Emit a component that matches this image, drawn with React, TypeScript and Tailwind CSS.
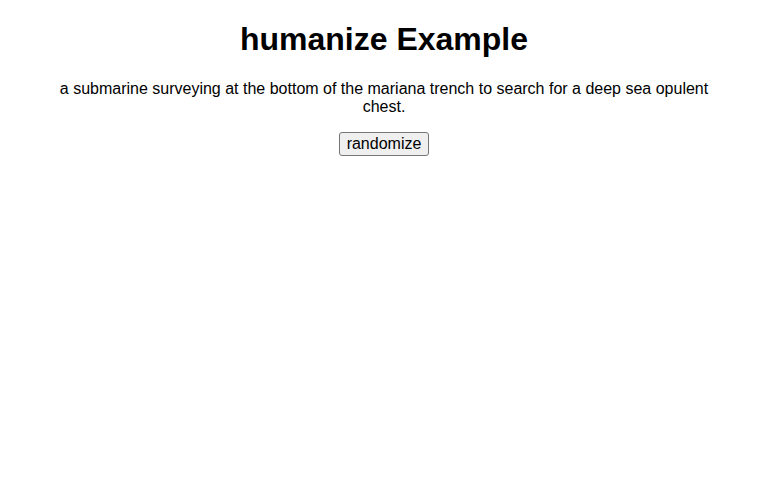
import React, { useState } from "react";

const phrases = [
  "a submarine surveying at the bottom of the mariana trench to search for a deep sea opulent chest.",
  "a lighthouse keeper counting the waves that break against the rocks on a stormy autumn night.",
  "a caravan of camels crossing the golden dunes in search of a hidden oasis at dawn.",
];

const App: React.FC = () => {
  const [index, setIndex] = useState(0);

  return (
    <div className="min-h-screen bg-white px-2 text-black font-['Liberation_Sans',Arial,sans-serif]">
      <div className="mx-auto max-w-[680px] text-center">
        <h1 className="pt-[21px] pb-[22px] text-[32px] font-bold leading-[37px]">
          humanize Example
        </h1>
        <p className="text-base leading-[18px]">{phrases[index]}</p>
        <button
          className="mt-4 rounded-[3px] border border-[#767676] bg-[#efefef] px-[7px] py-[2px] text-base leading-[18px] text-black hover:bg-[#e5e5e5]"
          onClick={() => setIndex((index + 1) % phrases.length)}
        >
          randomize
        </button>
      </div>
    </div>
  );
};

export default App;
